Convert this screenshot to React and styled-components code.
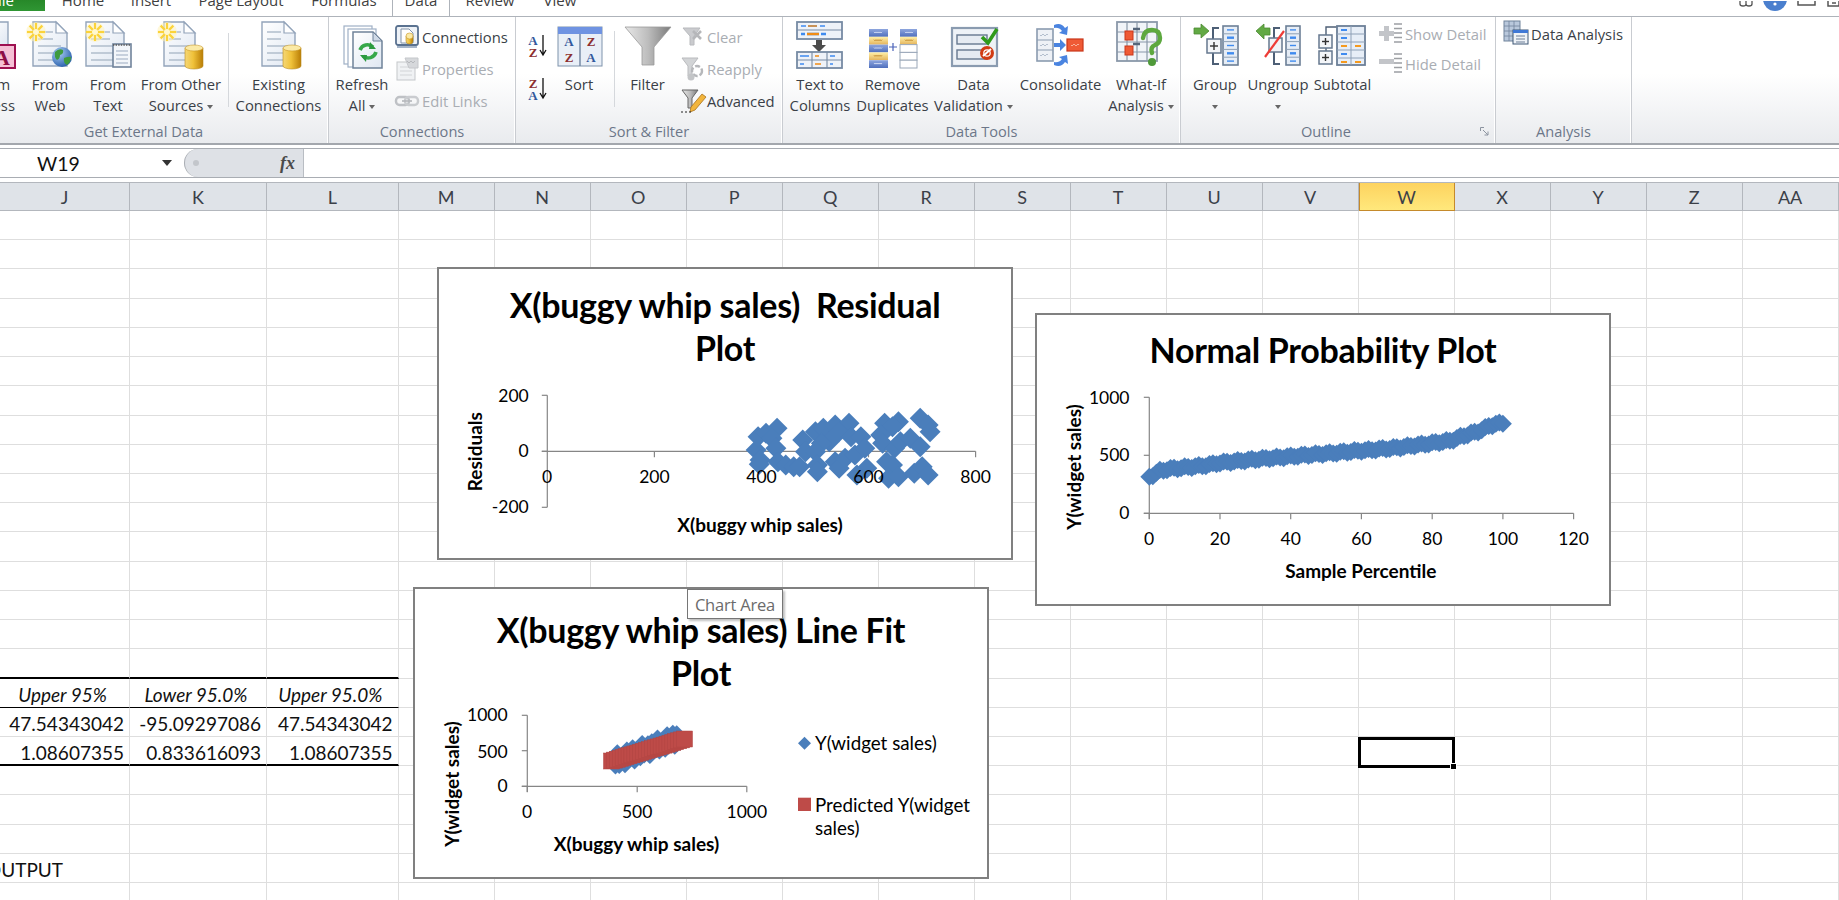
import React from "react";
import styled, { createGlobalStyle } from "styled-components";

const UI = `"Open Sans", "Noto Sans", sans-serif`;
const SHEET = `Lato, "Open Sans", sans-serif`;

const COLS = ["J", "K", "L", "M", "N", "O", "P", "Q", "R", "S", "T", "U", "V", "W", "X", "Y", "Z", "AA"];
const COL_TEMPLATE = "130px 137px 131.6px repeat(15, 96px)";
const ROW_COUNT = 24;

const Global = createGlobalStyle`
  html, body { margin: 0; padding: 0; background: #fff; }
  body { font-family: ${UI}; overflow: hidden; }
`;

const Page = styled.div`
  width: 1839px;
  height: 900px;
  overflow: hidden;
  display: flex;
  flex-direction: column;
  background: #fff;
`;

const Defs = styled.svg`
  position: absolute;
  width: 0;
  height: 0;
`;

/* tabs, the top of the window is cut off in the picture */
const TabBar = styled.div`
  height: 17px;
  flex: none;
  display: flex;
  box-sizing: border-box;
  border-bottom: 1px solid #aeb3ba;
  overflow: hidden;
`;

const Tab = styled.div`
  width: ${(p) => p.$w}px;
  margin-left: ${(p) => p.$ml || 0}px;
  height: 22px;
  margin-top: -11px;
  line-height: 22px;
  text-align: center;
  font-size: 15px;
  color: #3f3f3f;
  flex: none;
  box-sizing: border-box;
  ${(p) =>
    p.$active &&
    `
    background: #fff;
    height: 28px;
    border: 1px solid #aeb3ba;
    line-height: 20px;
  `}
`;

const FileTab = styled(Tab)`
  background: linear-gradient(#1f7a1f, #2f9633);
  color: #fff;
  text-align: right;
  padding-right: 31px;
`;

const WinControls = styled.div`
  margin-left: auto;
  width: 101px;
  flex: none;
  height: 16px;
`;

const Ribbon = styled.div`
  height: 128px;
  flex: none;
  display: flex;
  box-sizing: border-box;
  overflow: hidden;
  background: linear-gradient(#fff 0%, #fff 45%, #e9ebee 100%);
  border-bottom: 2px solid #a3a7ad;
`;

const Group = styled.div`
  position: relative;
  width: ${(p) => p.$w}px;
  flex: none;
  display: flex;
  flex-direction: column;
  box-sizing: border-box;
  border-right: 1px solid #c9ccd1;
  box-shadow: inset -1px 0 0 #fff;
`;

const GroupRow = styled.div`
  height: 104px;
  flex: none;
  display: flex;
`;

const GroupLabel = styled.div`
  flex: 1;
  text-align: center;
  font-size: 14.6px;
  line-height: 21px;
  color: #6c7789;
  padding-right: ${(p) => p.$shift || 0}px;
`;

const Launcher = styled.svg`
  position: absolute;
  right: 6px;
  bottom: 7px;
  width: 9px;
  height: 9px;
`;

const Large = styled.div`
  width: ${(p) => p.$w}px;
  margin-left: ${(p) => p.$ml || 0}px;
  flex: none;
  display: flex;
  flex-direction: column;
  align-items: center;
  padding-top: 3px;
  font-size: 14.8px;
  line-height: 21px;
  color: #3a3f47;
  white-space: nowrap;
`;

const Slot = styled.svg`
  width: 52px;
  height: 50px;
  flex: none;
  overflow: visible;
  margin-bottom: 4px;
`;

const Label = styled.div`
  text-align: center;
`;

const Caret = styled.span`
  display: inline-block;
  vertical-align: middle;
  margin-left: ${(p) => (p.$alone ? 0 : 4)}px;
  border-left: 3.5px solid transparent;
  border-right: 3.5px solid transparent;
  border-top: 4px solid #666;
`;

const Stack = styled.div`
  flex: none;
  display: flex;
  flex-direction: column;
  padding-top: ${(p) => p.$top}px;
  padding-left: ${(p) => p.$left || 0}px;
  width: ${(p) => (p.$w ? `${p.$w}px` : "auto")};
`;

const Small = styled.div`
  height: ${(p) => p.$h}px;
  display: flex;
  align-items: center;
  gap: 3px;
  font-size: 14.8px;
  white-space: nowrap;
  color: ${(p) => (p.$off ? "#a9adb3" : "#3a3f47")};
`;

const SmallIcon = styled.svg`
  width: 24px;
  height: 26px;
  flex: none;
  overflow: visible;
`;

const SortIcon = styled.svg`
  width: 21px;
  height: 24px;
  flex: none;
  overflow: visible;
`;

const InnerDivider = styled.div`
  width: 1px;
  flex: none;
  margin: ${(p) => p.$mt}px 0 6px ${(p) => p.$ml || 0}px;
  height: ${(p) => p.$h}px;
  background: #d5d8dc;
`;

const IconLetter = styled.text`
  font-family: "Liberation Serif", serif;
  font-weight: 700;
`;

/* name box and formula line */
const FormulaBar = styled.div`
  height: 30px;
  flex: none;
  margin-top: 3px;
  display: flex;
  box-sizing: border-box;
  border-top: 1px solid #a9adb3;
  border-bottom: 1px solid #a9adb3;
`;

const NameBox = styled.div`
  width: 184px;
  flex: none;
  display: flex;
  align-items: center;
  padding-left: 37px;
  padding-right: 12px;
  box-sizing: border-box;
  font-family: ${SHEET};
  font-size: 19.5px;
  color: #111;
`;

const NameArrow = styled.span`
  margin-left: auto;
  border-left: 5px solid transparent;
  border-right: 5px solid transparent;
  border-top: 6px solid #333;
`;

const FxBox = styled.div`
  width: 120px;
  flex: none;
  display: flex;
  align-items: center;
  justify-content: space-between;
  box-sizing: border-box;
  padding: 0 8px 0 8px;
  background: #dee1e6;
  border-left: 1px solid #a9adb3;
  border-right: 1px solid #b9bdc3;
  border-radius: 16px 0 0 16px;
`;

const FxDot = styled.span`
  width: 6px;
  height: 6px;
  border-radius: 50%;
  background: #c3c6cb;
`;

const FxMark = styled.span`
  font-family: "Liberation Serif", serif;
  font-style: italic;
  font-weight: 700;
  font-size: 18px;
  color: #4a4a4a;
`;

const HeaderRow = styled.div`
  height: 29px;
  flex: none;
  margin-top: 4px;
  display: grid;
  grid-template-columns: ${COL_TEMPLATE};
  background: #dfe3e8;
  box-sizing: border-box;
  border-bottom: 1px solid #b3b7bd;
  border-top: 1px solid #b3b7bd;
`;

const HeaderCell = styled.div`
  display: flex;
  align-items: center;
  justify-content: center;
  font-family: ${SHEET};
  font-size: 18px;
  color: #3b4048;
  box-sizing: border-box;
  border-right: 1px solid #b3b7bd;
  ${(p) =>
    p.$active &&
    `
    background: linear-gradient(#fdd35f, #ffe87c);
    border: 1px solid #c58a2b;
    border-top: none;
    margin-bottom: -1px;
  `}
`;

const Sheet = styled.div`
  position: relative;
  flex: 1;
  display: grid;
  grid-template-columns: ${COL_TEMPLATE};
  grid-auto-rows: 29.23px;
`;

const Cell = styled.div`
  box-sizing: border-box;
  border-right: 1px solid #dedede;
  border-bottom: ${(p) => p.$rule || "1px solid #dedede"};
  display: flex;
  align-items: center;
  justify-content: ${(p) => (p.$italic ? "center" : "flex-end")};
  padding-right: ${(p) => (p.$italic ? 4 : p.$pad || 5)}px;
  padding-top: 3px;
  font-family: ${SHEET};
  font-size: 19px;
  font-style: ${(p) => (p.$italic ? "italic" : "normal")};
  color: #111;
  white-space: nowrap;
  overflow: hidden;
`;

const Selected = styled.div`
  position: absolute;
  left: 1358px;
  top: 526px;
  width: 97px;
  height: 31px;
  box-sizing: border-box;
  border: 3px solid #000;
  &::after {
    content: "";
    position: absolute;
    right: -5px;
    bottom: -5px;
    width: 5px;
    height: 5px;
    background: #000;
    border: 1px solid #fff;
  }
`;

/* charts float free on the worksheet */
const ChartFrame = styled.div`
  position: absolute;
  left: ${(p) => p.$x}px;
  top: ${(p) => p.$y}px;
  width: 576px;
  height: ${(p) => p.$h}px;
  box-sizing: border-box;
  border: 2px solid #808080;
  background: #fff;
`;

const ChartTitle = styled.div`
  height: ${(p) => p.$h}px;
  padding-top: ${(p) => p.$top}px;
  box-sizing: border-box;
  text-align: center;
  font-family: ${SHEET};
  font-weight: 700;
  font-size: 34px;
  line-height: 43px;
  letter-spacing: -0.3px;
  color: #000;
  white-space: nowrap;
`;

const Plot = styled.svg`
  display: block;
  overflow: visible;
`;

const Tick = styled.text`
  font-family: ${SHEET};
  font-size: 17.5px;
  fill: #000;
  dominant-baseline: central;
`;

const AxisName = styled.text`
  font-family: ${SHEET};
  font-weight: 700;
  font-size: 19px;
  fill: #000;
  dominant-baseline: central;
  text-anchor: middle;
`;

const LegendText = styled(Tick)`
  font-size: 18.8px;
`;

const Tooltip = styled.div`
  position: absolute;
  left: 687px;
  top: 378px;
  width: 96px;
  height: 30px;
  box-sizing: border-box;
  border: 1px solid #767676;
  background: #fff;
  box-shadow: 2px 2px 2px rgba(0, 0, 0, 0.25);
  display: flex;
  align-items: center;
  justify-content: center;
  font-size: 16.5px;
  letter-spacing: -0.2px;
  color: #6b6b6b;
`;

/* --- ribbon icon pieces --- */

function GradientDefs() {
  return (
    <Defs aria-hidden="true">
      <defs>
        <linearGradient id="page" x1="0" y1="0" x2="1" y2="1">
          <stop offset="0" stopColor="#fff" />
          <stop offset="1" stopColor="#dfe7f2" />
        </linearGradient>
        <linearGradient id="gold" x1="0" y1="0" x2="1" y2="0">
          <stop offset="0" stopColor="#f5d777" />
          <stop offset="0.45" stopColor="#f0c23a" />
          <stop offset="1" stopColor="#b97d06" />
        </linearGradient>
        <linearGradient id="funnel" x1="0" y1="0" x2="1" y2="0">
          <stop offset="0" stopColor="#e8e8e8" />
          <stop offset="0.5" stopColor="#bdbdbd" />
          <stop offset="1" stopColor="#7b7b7b" />
        </linearGradient>
        <linearGradient id="blueRow" x1="0" y1="0" x2="0" y2="1">
          <stop offset="0" stopColor="#8ea6de" />
          <stop offset="1" stopColor="#4f6fbd" />
        </linearGradient>
        <linearGradient id="goldRow" x1="0" y1="0" x2="0" y2="1">
          <stop offset="0" stopColor="#fff0a8" />
          <stop offset="1" stopColor="#e4b45c" />
        </linearGradient>
        <radialGradient id="globe" cx="0.35" cy="0.3" r="0.8">
          <stop offset="0" stopColor="#a9cdf2" />
          <stop offset="1" stopColor="#1f57a8" />
        </radialGradient>
      </defs>
    </Defs>
  );
}

function Doc({ x, y, w, h, lines = 5 }) {
  const fold = 11;
  return (
    <g>
      <path
        d={`M${x} ${y}h${w - fold}l${fold} ${fold}v${h - fold}h-${w}z`}
        fill="url(#page)"
        stroke="#93a4ba"
        strokeWidth="1.4"
      />
      <path d={`M${x + w - fold} ${y}v${fold}h${fold}z`} fill="#fff" stroke="#93a4ba" strokeWidth="1.2" />
      {Array.from({ length: lines }).map((_, i) => (
        <line
          key={i}
          x1={x + 5}
          x2={i < 2 ? x + w - 14 : x + w - 6}
          y1={y + 10 + i * 7}
          y2={y + 10 + i * 7}
          stroke="#b4c0cf"
          strokeWidth="1.6"
        />
      ))}
    </g>
  );
}

function Burst({ x, y }) {
  const rays = [0, 45, 90, 135];
  return (
    <g>
      <circle cx={x} cy={y} r="10" fill="#fff3b8" opacity="0.55" />
      {rays.map((r) => (
        <line
          key={r}
          x1={x - 9}
          x2={x + 9}
          y1={y}
          y2={y}
          stroke="#fbd33a"
          strokeWidth="2.2"
          transform={`rotate(${r} ${x} ${y})`}
        />
      ))}
      <circle cx={x} cy={y} r="3" fill="#fff8d0" />
    </g>
  );
}

function Can({ x, y, w = 18, h = 22 }) {
  return (
    <g>
      <path
        d={`M${x} ${y + 3}v${h - 5}a${w / 2} 3 0 0 0 ${w} 0v-${h - 5}z`}
        fill="url(#gold)"
        stroke="#b98a1c"
        strokeWidth="0.6"
      />
      <ellipse cx={x + w / 2} cy={y + 3} rx={w / 2} ry="3" fill="#fbeaa6" stroke="#c9992c" strokeWidth="0.6" />
    </g>
  );
}

function RowBlock({ x, y, w, h, gold, white }) {
  const fill = white ? "#fff" : gold ? "url(#goldRow)" : "url(#blueRow)";
  const wave = gold ? "#b97a18" : "#dfe8fb";
  return (
    <g>
      <rect x={x} y={y} width={w} height={h} fill={fill} stroke={white ? "#9aa7b8" : "none"} />
      {!white && (
        <path
          d={`M${x + 5} ${y + h / 2 - 1}q1 2 2 0q1 2 2 0q1 2 2 0q1 2 2 0`}
          fill="none"
          stroke={wave}
          strokeWidth="0.9"
        />
      )}
    </g>
  );
}

function OutlineColumn({ x, y, w, h }) {
  const rowH = h / 5;
  return (
    <g>
      <rect x={x} y={y} width={w} height={h} fill="#e6edf6" stroke="#6c7f97" strokeWidth="1.6" />
      {[0, 1, 2, 3, 4].map((i) => (
        <g key={i}>
          {i > 0 && <line x1={x} x2={x + w} y1={y + i * rowH} y2={y + i * rowH} stroke="#8ea0b6" />}
          <line
            x1={x + 4}
            x2={x + w - 4}
            y1={y + i * rowH + rowH / 2}
            y2={y + i * rowH + rowH / 2}
            stroke="#3f8bef"
            strokeWidth={i % 2 ? 2.4 : 1.4}
          />
        </g>
      ))}
    </g>
  );
}

function PlusBox({ x, y, s = 14, minusOnly }) {
  return (
    <g>
      <rect x={x} y={y} width={s} height={s} fill="#f4f6f9" stroke="#66788f" strokeWidth="1.5" />
      <line x1={x + 3} x2={x + s - 3} y1={y + s / 2} y2={y + s / 2} stroke="#333" strokeWidth="1.4" />
      {!minusOnly && <line x1={x + s / 2} x2={x + s / 2} y1={y + 3} y2={y + s - 3} stroke="#333" strokeWidth="1.4" />}
    </g>
  );
}

function Shaded({ d, fill = "#62a944", stroke = "#4c8a33" }) {
  return <path d={d} fill={fill} stroke={stroke} strokeWidth="0.8" />;
}

const Icons = {
  access: (
    <g>
      <path d="M22 2h20v23h-20z" fill="url(#page)" stroke="#93a4ba" strokeWidth="1.4" />
      <rect x="24" y="25" width="25" height="23" fill="#f5c0d5" stroke="#9e1050" strokeWidth="2" />
      <IconLetter x="36" y="45" fontSize="22" fill="#8d0c46" textAnchor="middle">
        A
      </IconLetter>
    </g>
  ),
  web: (
    <g>
      <Doc x={9} y={2} w={34} h={44} />
      <Burst x={12} y={12} />
      <circle cx="38" cy="37" r="10" fill="url(#globe)" />
      <path d="M31 32q4-4 8-2q1 4-3 5q0 4-3 5q-3-3-2-8zM40 38q5-2 7-1q0 5-4 8q-4-2-3-7z" fill="#3e9b3e" />
    </g>
  ),
  text: (
    <g>
      <Doc x={4} y={2} w={38} h={44} />
      <Burst x={13} y={12} />
      <rect x="31" y="24" width="18" height="23" fill="#f3f6fa" stroke="#71849c" strokeWidth="1.6" />
      <line x1="31" x2="49" y1="25" y2="25" stroke="#555" strokeWidth="1.4" strokeDasharray="1.4 1.2" />
      {[31, 35, 39, 43].map((y) => (
        <line key={y} x1="34" x2="46" y1={y} y2={y} stroke="#a9b8ca" strokeWidth="1.2" />
      ))}
    </g>
  ),
  other: (
    <g>
      <Doc x={9} y={2} w={31} h={44} />
      <Burst x={12} y={12} />
      <Can x={30} y={25} h={23} />
    </g>
  ),
  existing: (
    <g>
      <Doc x={9} y={2} w={33} h={44} />
      <Can x={30} y={25} h={23} />
    </g>
  ),
  refresh: (
    <g>
      <rect x="8" y="6" width="28" height="38" fill="#fff" stroke="#9fb0c5" strokeWidth="1.2" />
      <rect x="12" y="9" width="28" height="38" fill="#fff" stroke="#9fb0c5" strokeWidth="1.2" />
      <path d="M17 12h20l9 9v27h-29z" fill="url(#page)" stroke="#6f8299" strokeWidth="1.5" />
      <path d="M37 12v9h9z" fill="#cfd9e6" stroke="#6f8299" />
      <path d="M24 30a8 8 0 0 1 13-3" fill="none" stroke="#36a84a" strokeWidth="3.6" />
      <path d="M40 32a8 8 0 0 1-13 4" fill="none" stroke="#36a84a" strokeWidth="3.6" />
      <path d="M34 22l6 7h-7zM30 42l-6-7h7z" fill="#2b9a3f" />
    </g>
  ),
  sort: (
    <g>
      <rect x="5" y="7" width="44" height="39" fill="#e9eff7" stroke="#7f93ac" strokeWidth="1" />
      <rect x="5" y="7" width="44" height="7" fill="#6f93e2" />
      <line x1="27" x2="27" y1="14" y2="46" stroke="#6f84a0" strokeWidth="1.4" />
      <IconLetter x="16" y="26" fontSize="13" fill="#33589c" textAnchor="middle">A</IconLetter>
      <IconLetter x="16" y="42" fontSize="13" fill="#8c2f2f" textAnchor="middle">Z</IconLetter>
      <IconLetter x="38" y="26" fontSize="13" fill="#8c2f2f" textAnchor="middle">Z</IconLetter>
      <IconLetter x="38" y="42" fontSize="13" fill="#33589c" textAnchor="middle">A</IconLetter>
    </g>
  ),
  filter: <path d="M3 7h46l-17 20v18h-12v-18z" fill="url(#funnel)" stroke="#9a9a9a" strokeWidth="0.8" />,
  textToCols: (
    <g>
      <rect x="3" y="2" width="45" height="17" fill="#eef2f8" stroke="#768aa3" strokeWidth="1.8" />
      <line x1="3" x2="48" y1="10" y2="10" stroke="#768aa3" strokeWidth="1.2" />
      <path d="M7 6h5M14 6h9M26 6h5" stroke="#3f8bef" strokeWidth="1.4" />
      <path d="M14 6h9" stroke="#f08c16" strokeWidth="1.4" />
      <path d="M7 14h4M13 14h12M27 14h5" stroke="#3f8bef" strokeWidth="2.4" />
      <path d="M13 14h12" stroke="#f08c16" strokeWidth="2.4" />
      <path d="M22 20h6v5h4l-7 7-7-7h4z" fill="#4c4c4c" />
      <rect x="3" y="32" width="45" height="16" fill="#eef2f8" stroke="#768aa3" strokeWidth="1.8" />
      <path d="M18 32v16M33 32v16M3 40h45" stroke="#768aa3" strokeWidth="1.1" />
      <path d="M6 36h9M36 36h5M6 44h4M36 44h3" stroke="#3f8bef" strokeWidth="1.6" />
      <path d="M21 36h4M21 44h6" stroke="#f08c16" strokeWidth="1.6" />
    </g>
  ),
  removeDup: (
    <g>
      {[0, 1, 2, 3, 4].map((i) => (
        <RowBlock key={i} x={2} y={9 + i * 7.8} w={19} h={7.8} gold={i % 2 === 1} />
      ))}
      <path d="M22 27h8M26 23v8" stroke="#4a62b8" strokeWidth="1.2" />
      <RowBlock x={33} y={9} w={17} h={7.8} />
      <RowBlock x={33} y={16.8} w={17} h={7.8} gold />
      {[2, 3, 4].map((i) => (
        <RowBlock key={i} x={33} y={9 + i * 7.8} w={17} h={7.8} white />
      ))}
    </g>
  ),
  validation: (
    <g>
      <rect x="4" y="8" width="45" height="38" fill="#eef2f7" stroke="#8a9bb0" strokeWidth="2.2" />
      <rect x="9" y="15" width="30" height="9" fill="#e6ebf2" stroke="#66788f" strokeWidth="1.4" />
      <rect x="9" y="30" width="30" height="9" fill="#e6ebf2" stroke="#66788f" strokeWidth="1.4" />
      <path d="M34 17l6 6 9-14" fill="none" stroke="#2f9a1a" strokeWidth="3.6" />
      <circle cx="39" cy="33" r="7" fill="#d13b13" />
      <path d="M35 36l8-7" stroke="#fff" strokeWidth="2" />
      <circle cx="39" cy="33" r="3.2" fill="none" stroke="#fff" strokeWidth="1.2" />
    </g>
  ),
  consolidate: (
    <g>
      <rect x="2" y="9" width="16" height="32" fill="#eef1f6" stroke="#8a9bb0" strokeWidth="1.6" />
      <path d="M2 20h16M2 30h16" stroke="#8a9bb0" />
      <path d="M5 15q1 2 2 0t2 0t2 0t2 0M5 25q1 2 2 0t2 0t2 0t2 0M5 35q1 2 2 0t2 0t2 0t2 0" fill="none" stroke="#a5b2c4" strokeWidth="0.8" />
      <rect x="32" y="19" width="16" height="12" fill="#ef5a35" stroke="#c9361a" strokeWidth="1.2" />
      <path d="M36 25q1 2 2 0t2 0t2 0t2 0" fill="none" stroke="#fbc4b0" strokeWidth="0.8" />
      <path d="M19 23h6v-4l6 6-6 6v-4h-6z" fill="#4a84e0" />
      <path d="M19 5q7-3 11 3l3-2-1 9-8-2 3-2q-3-4-8-3z" fill="#4a84e0" />
      <path d="M19 45q7 3 11-3l3 2-1-9-8 2 3 2q-3 4-8 3z" fill="#4a84e0" />
    </g>
  ),
  whatIf: (
    <g>
      <rect x="2" y="2" width="40" height="39" fill="#f1f4f8" stroke="#8a98a9" strokeWidth="1.8" />
      <path d="M12 2v39M22 2v39M32 2v39M2 12h40M2 22h40M2 32h40" stroke="#8a98a9" strokeWidth="1.2" />
      <rect x="10" y="11" width="8" height="9" fill="#ef5a35" stroke="#c9361a" />
      <rect x="10" y="26" width="8" height="9" fill="#ef5a35" stroke="#c9361a" />
      <path d="M18 9h7M18 24h7" stroke="#55657a" strokeWidth="2.4" />
      <path
        d="M28 18q1-8 9-8t8 8q0 5-5 7t-3 8"
        fill="none"
        stroke="#5da83f"
        strokeWidth="4.4"
        strokeLinecap="round"
      />
      <circle cx="37" cy="42" r="4" fill="#4f9a3a" />
    </g>
  ),
  group: (
    <g>
      <Shaded d="M5 8h7v-4l8 7-8 7v-4h-7z" />
      <path d="M30 8h-6v36h6" fill="none" stroke="#4d5f76" strokeWidth="2" />
      <PlusBox x={18} y={19} />
      <OutlineColumn x={34} y={6} w={15} h={39} />
    </g>
  ),
  ungroup: (
    <g>
      <Shaded d="M4 11l8-7v4h6v7h-6v4z" />
      <path d="M28 8h-6v36h6" fill="none" stroke="#4d5f76" strokeWidth="2" />
      <rect x="17" y="18" width="13" height="14" fill="#f1f3f6" stroke="#66788f" strokeWidth="1.5" />
      <line x1="13" y1="37" x2="32" y2="11" stroke="#ee3c36" strokeWidth="2.2" />
      <OutlineColumn x={34} y={6} w={14} h={39} />
    </g>
  ),
  subtotal: (
    <g>
      <path d="M9 15v-8h11M9 28v3" fill="none" stroke="#4d5f76" strokeWidth="1.4" />
      <PlusBox x={2} y={15} s={13} />
      <PlusBox x={2} y={31} s={13} />
      <rect x="20" y="6" width="28" height="39" fill="#e7eef7" stroke="#6c7f97" strokeWidth="1.8" />
      <path d="M34 6v39M20 14h28M20 22h28M20 30h28M20 38h28" stroke="#8ea0b6" />
      <path d="M24 10h6M24 18h6M24 34h6" stroke="#3f8bef" strokeWidth="1.8" />
      <path d="M24 26h6M38 26h6M24 42h6M38 42h6" stroke="#f59a1f" strokeWidth="1.8" />
    </g>
  ),
  connections: (
    <g>
      <rect x="1" y="2" width="22" height="19" rx="2" fill="#eef2f7" stroke="#5a7290" strokeWidth="1.8" />
      <path d="M6 5h8l4 4v10h-12z" fill="#fff" stroke="#8293a8" />
      <Can x={11} y={9} w={7} h={10} />
      <path d="M2 23h20" stroke="#8ea2bb" strokeWidth="1.6" />
    </g>
  ),
  properties: (
    <g opacity="0.75">
      <rect x="2" y="6" width="18" height="18" fill="#eceef1" stroke="#b2b5ba" />
      <path d="M5 11h12M5 15h12M5 19h12" stroke="#c3c6ca" />
      <path d="M10 2h13v10h-9z" fill="#c9ccd0" stroke="#b2b5ba" />
      <path d="M12 5l2 2 2-2 2 2 2-2" stroke="#9ea1a6" fill="none" />
    </g>
  ),
  editLinks: (
    <g opacity="0.8">
      <rect x="1" y="9" width="13" height="8" rx="3.5" fill="none" stroke="#b1b4b9" strokeWidth="2.4" />
      <rect x="10" y="9" width="13" height="8" rx="3.5" fill="none" stroke="#bfc2c6" strokeWidth="2.4" />
      <line x1="7" x2="17" y1="13" y2="13" stroke="#a5a8ad" strokeWidth="1.6" />
    </g>
  ),
  clear: (
    <g opacity="0.8">
      <path d="M3 4h17l-6 8v9h-4v-9z" fill="#bdbfc3" stroke="#a8aaae" />
      <path d="M13 7l8 8M21 7l-8 8" stroke="#a4a6aa" strokeWidth="2.6" />
    </g>
  ),
  reapply: (
    <g opacity="0.8">
      <path d="M2 2h16l-6 8v10h-4v-10z" fill="#c8cacd" stroke="#a8aaae" />
      <circle cx="17" cy="15" r="5" fill="none" stroke="#a4a6aa" strokeWidth="2.4" strokeDasharray="5 2" />
      <circle cx="11" cy="21" r="3.5" fill="#b5b7ba" />
    </g>
  ),
  advanced: (
    <g>
      <path d="M2 2h16l-6 8v10h-4v-10z" fill="url(#funnel)" stroke="#666" />
      <path d="M22 6l4 3-11 13-5 2 1-5z" fill="#f2b53c" stroke="#a8721d" strokeWidth="0.8" />
      <path d="M1 24h2M5 24h2M9 24h2" stroke="#222" strokeWidth="1.2" />
    </g>
  ),
  showDetail: (
    <g opacity="0.85">
      <path d="M1 10h5v-5h5v5h5v5h-5v5h-5v-5h-5z" fill="#b9bcc0" />
      <path d="M16 3h8M16 7.5h8M16 12h8M16 16.5h8M16 21h8" stroke="#8c8f94" strokeWidth="1.6" />
    </g>
  ),
  hideDetail: (
    <g opacity="0.85">
      <rect x="1" y="8" width="15" height="5" fill="#b9bcc0" />
      <path d="M16 3h8M16 7.5h8M16 12h8M16 16.5h8M16 21h8" stroke="#8c8f94" strokeWidth="1.6" />
    </g>
  ),
  dataAnalysis: (
    <g>
      <rect x="0" y="0" width="16" height="20" fill="#b9c8dc" stroke="#71849c" />
      <path d="M5 0v20M10 0v20M0 5h16M0 10h16M0 15h16" stroke="#71849c" strokeWidth="0.8" />
      <rect x="9" y="9" width="15" height="14" fill="#eef2f7" stroke="#3f5876" />
      <rect x="9" y="9" width="15" height="3" fill="#3f78d6" />
      <path d="M12 15h9M12 18h9M12 21h9" stroke="#6c7f97" />
    </g>
  ),
};

function SortSmall({ first, second }) {
  const color = (l) => (l === "A" ? "#33589c" : "#8c2f2f");
  return (
    <SortIcon viewBox="0 0 21 24">
      <IconLetter x="6" y="11" fontSize="13" fill={color(first)} textAnchor="middle">{first}</IconLetter>
      <IconLetter x="6" y="23" fontSize="13" fill={color(second)} textAnchor="middle">{second}</IconLetter>
      <path d="M16 1v19M13 16l3 5 3-5" fill="none" stroke="#111" strokeWidth="1.3" />
    </SortIcon>
  );
}

function LargeButton({ w, ml, icon, children }) {
  return (
    <Large $w={w} $ml={ml}>
      <Slot viewBox="0 0 52 50">{Icons[icon]}</Slot>
      <Label>{children}</Label>
    </Large>
  );
}

function SmallButton({ h, icon, off, children }) {
  return (
    <Small $h={h} $off={off}>
      <SmallIcon viewBox="0 0 24 26">{Icons[icon]}</SmallIcon>
      {children}
    </Small>
  );
}

function RibbonBar() {
  return (
    <Ribbon>
      <Group $w={329}>
        <GroupRow>
          <LargeButton w={52} ml={-34} icon="access">
            From
            <br />
            Access
          </LargeButton>
          <LargeButton w={64} icon="web">
            From
            <br />
            Web
          </LargeButton>
          <LargeButton w={52} icon="text">
            From
            <br />
            Text
          </LargeButton>
          <LargeButton w={94} icon="other">
            From Other
            <br />
            Sources
            <Caret />
          </LargeButton>
          <InnerDivider $mt={16} $h={74} />
          <LargeButton w={99} icon="existing">
            Existing
            <br />
            Connections
          </LargeButton>
        </GroupRow>
        <GroupLabel $shift={41}>Get External Data</GroupLabel>
      </Group>

      <Group $w={187}>
        <GroupRow>
          <LargeButton w={66} icon="refresh">
            Refresh
            <br />
            All
            <Caret />
          </LargeButton>
          <Stack $top={3.7}>
            <SmallButton h={32} icon="connections">Connections</SmallButton>
            <SmallButton h={32} icon="properties" off>Properties</SmallButton>
            <SmallButton h={32} icon="editLinks" off>Edit Links</SmallButton>
          </Stack>
        </GroupRow>
        <GroupLabel>Connections</GroupLabel>
      </Group>

      <Group $w={267}>
        <GroupRow>
          <Stack $top={7.5} $left={11} $w={27}>
            <Small $h={43}><SortSmall first="A" second="Z" /></Small>
            <Small $h={43}><SortSmall first="Z" second="A" /></Small>
          </Stack>
          <LargeButton w={50} icon="sort">Sort</LargeButton>
          <InnerDivider $mt={14} $ml={10} $h={76} />
          <LargeButton w={65} icon="filter">Filter</LargeButton>
          <Stack $top={3.7}>
            <SmallButton h={32} icon="clear" off>Clear</SmallButton>
            <SmallButton h={32} icon="reapply" off>Reapply</SmallButton>
            <SmallButton h={32} icon="advanced">Advanced</SmallButton>
          </Stack>
        </GroupRow>
        <GroupLabel>Sort &amp; Filter</GroupLabel>
      </Group>

      <Group $w={398}>
        <GroupRow>
          <LargeButton w={74} icon="textToCols">
            Text to
            <br />
            Columns
          </LargeButton>
          <LargeButton w={71} icon="removeDup">
            Remove
            <br />
            Duplicates
          </LargeButton>
          <LargeButton w={91} icon="validation">
            Data
            <br />
            Validation
            <Caret />
          </LargeButton>
          <LargeButton w={83} icon="consolidate">Consolidate</LargeButton>
          <LargeButton w={78} icon="whatIf">
            What-If
            <br />
            Analysis
            <Caret />
          </LargeButton>
        </GroupRow>
        <GroupLabel>Data Tools</GroupLabel>
      </Group>

      <Group $w={315}>
        <GroupRow>
          <LargeButton w={68} icon="group">
            Group
            <br />
            <Caret $alone />
          </LargeButton>
          <LargeButton w={58} icon="ungroup">
            Ungroup
            <br />
            <Caret $alone />
          </LargeButton>
          <LargeButton w={71} icon="subtotal">Subtotal</LargeButton>
          <Stack $top={1.7}>
            <SmallButton h={30} icon="showDetail" off>Show Detail</SmallButton>
            <SmallButton h={30} icon="hideDetail" off>Hide Detail</SmallButton>
          </Stack>
        </GroupRow>
        <GroupLabel $shift={24}>Outline</GroupLabel>
        <Launcher viewBox="0 0 9 9">
          <path d="M.5 4V.5H4M3 3l5 5M8 4.5V8H4.5" fill="none" stroke="#8c94a0" />
        </Launcher>
      </Group>

      <Group $w={136}>
        <GroupRow>
          <Stack $top={1.7} $left={8}>
            <SmallButton h={30} icon="dataAnalysis">Data Analysis</SmallButton>
          </Stack>
        </GroupRow>
        <GroupLabel>Analysis</GroupLabel>
      </Group>
    </Ribbon>
  );
}

/* --- charts --- */

function Diamond({ x, y, r, fill = "#4a7ebb" }) {
  return <polygon points={`${x - r},${y} ${x},${y - r} ${x + r},${y} ${x},${y + r}`} fill={fill} />;
}

function Axes({ ox, oy, top, bottom, xTicks, yTicks, right }) {
  const axis = "#868686";
  return (
    <g stroke={axis} strokeWidth="1.2" fill="none">
      <line x1={ox} x2={ox} y1={top} y2={bottom} />
      <line x1={ox - 5.5} x2={right} y1={oy} y2={oy} />
      {yTicks.map((y) => (
        <line key={y} x1={ox - 5.5} x2={ox} y1={y} y2={y} />
      ))}
      {xTicks.map((x) => (
        <line key={x} x1={x} x2={x} y1={oy} y2={oy + 6} />
      ))}
    </g>
  );
}

// marker centres read off the reference, in its crop units
const RESIDUALS = [
  [850, 585], [855, 545], [875, 535], [903, 520], [890, 550], [900, 580], [860, 615], [858, 628], [905, 620],
  [925, 630], [945, 635], [960, 635], [968, 555], [975, 590], [1000, 530], [1020, 520], [1050, 510], [1085, 505],
  [1060, 530], [1035, 560], [1015, 565], [1000, 590], [1005, 630], [1005, 650], [1050, 620], [1060, 640],
  [1075, 610], [1100, 600], [1090, 545], [1115, 545], [1125, 580], [1130, 640], [1105, 660], [1175, 505],
  [1210, 500], [1195, 515], [1165, 540], [1170, 565], [1200, 580], [1215, 560], [1240, 550], [1265, 575],
  [1180, 620], [1195, 630], [1185, 670], [1210, 665], [1250, 655], [1270, 635], [1285, 660], [1265, 490],
  [1285, 510], [1290, 530],
].map(([x, y]) => [x / 2.529 - 17, y / 3 - 12]);

const PERCENTILE_CURVE = [
  [0, 316], [1, 330], [3, 365], [5, 380], [15, 410], [20, 435], [30, 465], [40, 490], [50, 515], [60, 540],
  [70, 565], [80, 605], [85, 625], [90, 680], [93, 705], [96, 750], [98, 770], [100, 775],
];

function curveAt(p) {
  const i = PERCENTILE_CURVE.findIndex(([x]) => x >= p);
  if (i <= 0) return PERCENTILE_CURVE[0][1];
  const [x0, y0] = PERCENTILE_CURVE[i - 1];
  const [x1, y1] = PERCENTILE_CURVE[i];
  return y0 + ((p - x0) / (x1 - x0)) * (y1 - y0);
}

const PERCENTILES = Array.from({ length: 101 }, (_, i) => [
  114.3 + i * 3.536,
  200.3 - curveAt(i) * 0.116 + Math.sin(i * 1.7) * 1.2,
]);

const FIT_BLUE = Array.from({ length: 36 }, (_, i) => {
  const t = i / 35;
  const jitter = Math.sin(i * 2.4) * 8;
  return [200.5 + t * 67, 174.7 - t * 25 + jitter];
});

const FIT_RED = Array.from({ length: 26 }, (_, i) => {
  const t = i / 25;
  return [198.5 + t * 73, 174 - t * 22];
});

function ResidualChart() {
  return (
    <ChartFrame $x={437} $y={56} $h={293}>
      <ChartTitle $h={100} $top={14}>
        X(buggy whip sales)&nbsp; Residual
        <br />
        Plot
      </ChartTitle>
      <Plot width="572" height="189" viewBox="2 102 572 189">
        <Axes
          ox={110.3}
          oy={184.3}
          top={128.3}
          bottom={240.3}
          right={538.6}
          yTicks={[128.3, 184.3, 240.3]}
          xTicks={[217.4, 324.5, 431.5, 538.6]}
        />
        {RESIDUALS.map(([x, y], i) => (
          <Diamond key={i} x={x} y={y} r={10.5} />
        ))}
        {[["200", 128], ["0", 183.7], ["-200", 239.7]].map(([t, y]) => (
          <Tick key={t} x={91.7} y={y} textAnchor="end">{t}</Tick>
        ))}
        {[["0", 110], ["200", 217.4], ["400", 324.5], ["600", 431.5], ["800", 538.6]].map(([t, x]) => (
          <Tick key={t} x={x} y={209.7} textAnchor="middle">{t}</Tick>
        ))}
        <AxisName x={323} y={257}>X(buggy whip sales)</AxisName>
        <AxisName transform="translate(37.6 184.7) rotate(-90)">Residuals</AxisName>
      </Plot>
    </ChartFrame>
  );
}

function ProbabilityChart() {
  return (
    <ChartFrame $x={1035} $y={102} $h={293}>
      <ChartTitle $h={60} $top={13}>Normal Probability Plot</ChartTitle>
      <Plot width="572" height="229" viewBox="2 62 572 229">
        <Axes
          ox={114.3}
          oy={200.3}
          top={84.3}
          bottom={206}
          right={538.6}
          yTicks={[84.3, 142.3, 200.3]}
          xTicks={[114.3, 185, 255.7, 326.4, 397.2, 467.9, 538.6]}
        />
        {PERCENTILES.map(([x, y], i) => (
          <Diamond key={i} x={x} y={y} r={9} />
        ))}
        {[["1000", 84], ["500", 141.7], ["0", 199.3]].map(([t, y]) => (
          <Tick key={t} x={94.5} y={y} textAnchor="end">{t}</Tick>
        ))}
        {[["0", 114], ["20", 185], ["40", 255.7], ["60", 326.4], ["80", 397.2], ["100", 467.9], ["120", 538.6]].map(
          ([t, x]) => (
            <Tick key={t} x={x} y={225.7} textAnchor="middle">{t}</Tick>
          )
        )}
        <AxisName x={325.8} y={257}>Sample Percentile</AxisName>
        <AxisName transform="translate(38.4 154) rotate(-90)">Y(widget sales)</AxisName>
      </Plot>
    </ChartFrame>
  );
}

function LineFitChart() {
  return (
    <ChartFrame $x={413} $y={376} $h={292}>
      <ChartTitle $h={105} $top={19}>
        X(buggy whip sales) Line Fit
        <br />
        Plot
      </ChartTitle>
      <Plot width="572" height="183" viewBox="2 107 572 183">
        <Axes
          ox={114.3}
          oy={199.3}
          top={128.3}
          bottom={205}
          right={333.8}
          yTicks={[128.3, 163.7, 199.3]}
          xTicks={[114.3, 224.2, 333.8]}
        />
        {FIT_BLUE.map(([x, y], i) => (
          <Diamond key={i} x={x} y={y} r={8} />
        ))}
        {FIT_RED.map(([x, y], i) => (
          <rect key={i} x={x - 8} y={y - 8} width="16" height="16" fill="#be4b48" stroke="#b04542" strokeWidth="0.5" />
        ))}
        {[["1000", 127.3], ["500", 164], ["0", 198.7]].map(([t, y]) => (
          <Tick key={t} x={94.6} y={y} textAnchor="end">{t}</Tick>
        ))}
        {[["0", 114], ["500", 224.2], ["1000", 333.8]].map(([t, x]) => (
          <Tick key={t} x={x} y={224.7} textAnchor="middle">{t}</Tick>
        ))}
        <AxisName x={223.5} y={256}>X(buggy whip sales)</AxisName>
        <AxisName transform="translate(38.4 197) rotate(-90)">Y(widget sales)</AxisName>
        <Diamond x={391.5} y={156.3} r={6.5} />
        <LegendText x={402} y={155.7}>Y(widget sales)</LegendText>
        <rect x="385" y="210.7" width="13" height="13.3" fill="#be4b48" />
        <LegendText x={402} y={217}>Predicted Y(widget</LegendText>
        <LegendText x={402} y={240.7}>sales)</LegendText>
      </Plot>
    </ChartFrame>
  );
}

const TABLE_TEXT = {
  16: ["Upper 95%", "Lower 95.0%", "Upper 95.0%"],
  17: ["47.54343042", "-95.09297086", "47.54343042"],
  18: ["1.08607355", "0.833616093", "1.08607355"],
};

function ruleFor(row, col) {
  if (col > 2) return undefined;
  if (row === 15 || row === 18) return "2px solid #000";
  if (row === 16) return "1px solid #000";
  return undefined;
}

function SheetCells() {
  const cells = [];
  for (let row = 0; row < ROW_COUNT; row++) {
    COLS.forEach((col, c) => {
      const text = TABLE_TEXT[row] && TABLE_TEXT[row][c];
      const output = row === 22 && c === 0;
      cells.push(
        <Cell key={col + row} $rule={ruleFor(row, c)} $italic={row === 16 && c < 3} $pad={output ? 66 : 5}>
          {output ? "OUTPUT" : text}
        </Cell>
      );
    });
  }
  return cells;
}

export default function App() {
  return (
    <Page>
      <Global />
      <GradientDefs />
      <TabBar>
        <FileTab $w={57} $ml={-12}>File</FileTab>
        <Tab $w={76}>Home</Tab>
        <Tab $w={60}>Insert</Tab>
        <Tab $w={120}>Page Layout</Tab>
        <Tab $w={86}>Formulas</Tab>
        <Tab $w={58} $ml={5} $active>Data</Tab>
        <Tab $w={80}>Review</Tab>
        <Tab $w={60}>View</Tab>
        <WinControls>
          <svg width="101" height="16" viewBox="0 0 101 16">
            <path d="M2 0v3q0 2 3 2t3-2v-3M8 0v3q0 2 3 2t3-2v-3" fill="none" stroke="#555" strokeWidth="1.3" />
            <circle cx="37" cy="-2" r="12" fill="#4a7fce" />
            <circle cx="37" cy="3" r="1.6" fill="#fff" />
            <path d="M60 0v4h17v-4" fill="none" stroke="#555" strokeWidth="1.5" />
            <path d="M90 0v5h11v-5M94 2h4" fill="none" stroke="#555" strokeWidth="1.5" />
          </svg>
        </WinControls>
      </TabBar>

      <RibbonBar />

      <FormulaBar>
        <NameBox>
          W19
          <NameArrow />
        </NameBox>
        <FxBox>
          <FxDot />
          <FxMark>fx</FxMark>
        </FxBox>
      </FormulaBar>

      <HeaderRow>
        {COLS.map((c) => (
          <HeaderCell key={c} $active={c === "W"}>{c}</HeaderCell>
        ))}
      </HeaderRow>

      <Sheet>
        <SheetCells />
        <ResidualChart />
        <ProbabilityChart />
        <LineFitChart />
        <Tooltip>Chart Area</Tooltip>
        <Selected />
      </Sheet>
    </Page>
  );
}
